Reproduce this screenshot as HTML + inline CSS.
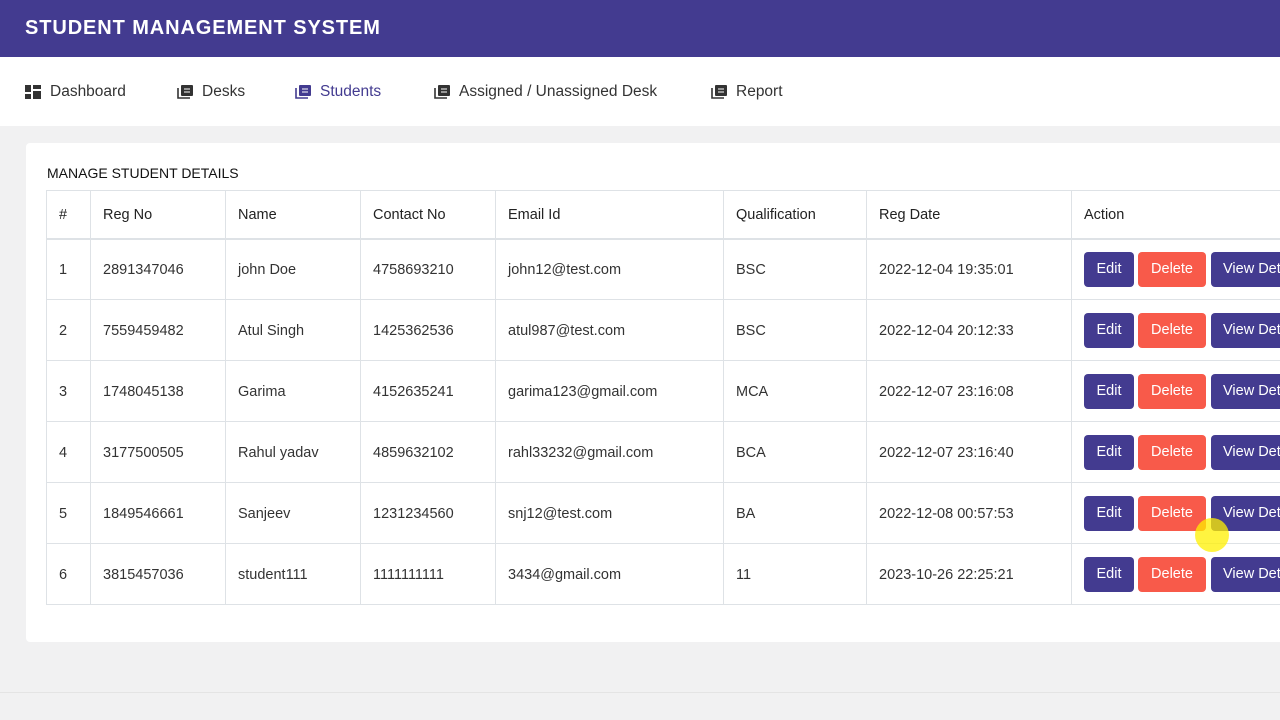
<!DOCTYPE html>
<html><head><style>
*{margin:0;padding:0;box-sizing:border-box}
body{width:1280px;height:720px;overflow:hidden;background:#f1f1f2;font-family:"Liberation Sans",sans-serif;color:#212529;position:relative}
.hdr{height:57px;background:#433b90;color:#fff;font-weight:bold;font-size:20px;letter-spacing:.9px;padding:17px 0 0 25px}
.nav{height:69px;background:#fff;position:relative;font-size:15.5px;color:#333}
.nav span{position:absolute;top:26px;display:flex;align-items:center;gap:9px}
.ic{width:16px;height:14px;display:inline-block}
.card{position:absolute;left:26px;top:143px;width:1270px;height:499px;background:#fff;border-radius:4px}
.title{position:absolute;left:47px;top:165px;font-size:14px;color:#111}
table{position:absolute;left:46px;top:190px;border-collapse:collapse;font-size:14.5px;table-layout:fixed;width:1300px}
td,th{border:1px solid #dee2e6;padding:1px 12px 0;text-align:left;white-space:nowrap;overflow:hidden;color:#333}
th{font-weight:normal;height:48px;color:#222;border-bottom:2px solid #dee2e6}
td{height:61px}
.b{display:inline-block;height:35px;line-height:35px;color:#fff;border-radius:4px;padding:0;text-align:center;vertical-align:middle}
.e{background:#433b90;width:50px}.d{background:#f85a4a;width:68px;margin-left:4px}.v{background:#433b90;margin-left:5px;width:90px;text-align:left;padding-left:12px}
td.a{padding:0 0 0 12px}
</style></head><body>
<div class="hdr">STUDENT MANAGEMENT SYSTEM</div>
<div class="nav">
<span style="left:25px"><svg class="ic" viewBox="0 0 16 14"><rect x="0" y="0" width="6" height="7" fill="#333"/><rect x="8" y="0" width="8" height="4" fill="#333"/><rect x="0" y="9" width="6" height="5" fill="#333"/><rect x="8" y="6" width="8" height="8" fill="#333"/></svg>Dashboard</span>
<span style="left:177px"><svg class="ic" viewBox="0 0 16 14"><path d="M1 3v10h12" stroke="#333" stroke-width="1.6" fill="none"/><rect x="4" y="0" width="12" height="11" rx="1" fill="#333"/><path d="M7 4h6M7 7h6" stroke="#fff"/></svg>Desks</span>
<span style="left:295px;color:#433b90"><svg class="ic" viewBox="0 0 16 14"><path d="M1 3v10h12" stroke="#433b90" stroke-width="1.6" fill="none"/><rect x="4" y="0" width="12" height="11" rx="1" fill="#433b90"/><path d="M7 4h6M7 7h6" stroke="#fff"/></svg>Students</span>
<span style="left:434px"><svg class="ic" viewBox="0 0 16 14"><path d="M1 3v10h12" stroke="#333" stroke-width="1.6" fill="none"/><rect x="4" y="0" width="12" height="11" rx="1" fill="#333"/><path d="M7 4h6M7 7h6" stroke="#fff"/></svg>Assigned / Unassigned Desk</span>
<span style="left:711px"><svg class="ic" viewBox="0 0 16 14"><path d="M1 3v10h12" stroke="#333" stroke-width="1.6" fill="none"/><rect x="4" y="0" width="12" height="11" rx="1" fill="#333"/><path d="M7 4h6M7 7h6" stroke="#fff"/></svg>Report</span>
</div>
<div class="card"></div>
<div class="title">MANAGE STUDENT DETAILS</div>
<table>
<colgroup><col style="width:44px"><col style="width:135px"><col style="width:135px"><col style="width:135px"><col style="width:228px"><col style="width:143px"><col style="width:205px"><col style="width:275px"></colgroup>
<tr><th>#</th><th>Reg No</th><th>Name</th><th>Contact No</th><th>Email Id</th><th>Qualification</th><th>Reg Date</th><th>Action</th></tr>
<tr><td>1</td><td>2891347046</td><td>john Doe</td><td>4758693210</td><td>john12@test.com</td><td>BSC</td><td>2022-12-04 19:35:01</td><td class="a"><span class="b e">Edit</span><span class="b d">Delete</span><span class="b v">View Details</span></td></tr>
<tr><td>2</td><td>7559459482</td><td>Atul Singh</td><td>1425362536</td><td>atul987@test.com</td><td>BSC</td><td>2022-12-04 20:12:33</td><td class="a"><span class="b e">Edit</span><span class="b d">Delete</span><span class="b v">View Details</span></td></tr>
<tr><td>3</td><td>1748045138</td><td>Garima</td><td>4152635241</td><td>garima123@gmail.com</td><td>MCA</td><td>2022-12-07 23:16:08</td><td class="a"><span class="b e">Edit</span><span class="b d">Delete</span><span class="b v">View Details</span></td></tr>
<tr><td>4</td><td>3177500505</td><td>Rahul yadav</td><td>4859632102</td><td>rahl33232@gmail.com</td><td>BCA</td><td>2022-12-07 23:16:40</td><td class="a"><span class="b e">Edit</span><span class="b d">Delete</span><span class="b v">View Details</span></td></tr>
<tr><td>5</td><td>1849546661</td><td>Sanjeev</td><td>1231234560</td><td>snj12@test.com</td><td>BA</td><td>2022-12-08 00:57:53</td><td class="a"><span class="b e">Edit</span><span class="b d">Delete</span><span class="b v">View Details</span></td></tr>
<tr><td>6</td><td>3815457036</td><td>student111</td><td>1111111111</td><td>3434@gmail.com</td><td>11</td><td>2023-10-26 22:25:21</td><td class="a"><span class="b e">Edit</span><span class="b d">Delete</span><span class="b v">View Details</span></td></tr>
</table>
<div style="position:absolute;left:1195px;top:518px;width:34px;height:34px;border-radius:50%;background:rgba(255,240,0,.75)"></div>
<div style="position:absolute;left:0;top:692px;width:1280px;height:1px;background:#e4e4e4"></div>
</body></html>
